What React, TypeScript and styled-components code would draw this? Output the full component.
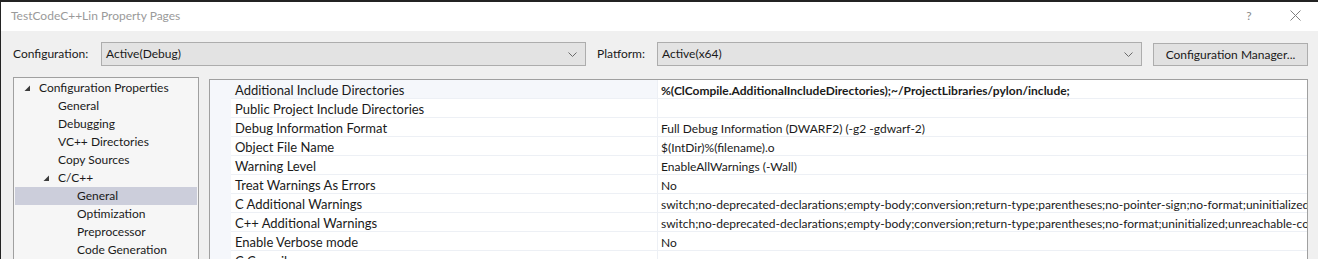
import React from "react";
import styled, { createGlobalStyle } from "styled-components";

const GlobalStyle = createGlobalStyle`
  *, *::before, *::after { box-sizing: border-box; }
  html, body { margin: 0; padding: 0; background: #232323; overflow: hidden; }
  body { font-family: Lato, "Noto Sans", sans-serif; font-size: 12px; color: #1a1a1a; }
`;

const Window = styled.div`
  margin: 2px 0 0 1px;
  height: 257px;
  background: #f0f0f0;
  display: flex;
  flex-direction: column;
  overflow: hidden;
`;

const TitleBar = styled.div`
  height: 29px;
  flex: none;
  background: #ffffff;
  display: flex;
  align-items: flex-start;
  padding-left: 10px;
`;

const Title = styled.div`
  flex: 1;
  font-size: 12px;
  line-height: 27px;
  color: #9a9a9a;
  white-space: nowrap;
`;

const CaptionButton = styled.div`
  width: 46px;
  height: 27px;
  display: flex;
  align-items: center;
  justify-content: center;
  color: #8a8a8a;
  font-size: 12px;
`;

const Body = styled.div`
  flex: 1;
  display: flex;
  flex-direction: column;
  gap: 11px;
  padding: 11px 10px 0 12px;
  min-height: 0;
`;

const ConfigRow = styled.div`
  display: flex;
  align-items: center;
  height: 24px;
  flex: none;
`;

const Label = styled.div<{ $w: number; $ml?: number }>`
  width: ${(p) => p.$w}px;
  margin-left: ${(p) => p.$ml ?? 0}px;
  line-height: 24px;
  white-space: nowrap;
`;

const Select = styled.div`
  width: 485px;
  height: 24px;
  border: 1px solid #adadad;
  background: #e3e3e3;
  display: flex;
  align-items: center;
  padding: 0 8px 0 4px;
  line-height: 22px;
`;

const SelectText = styled.span`
  flex: 1;
`;

const Button = styled.div`
  margin-left: 11px;
  width: 155px;
  height: 23px;
  border: 1px solid #adadad;
  background: #e1e1e1;
  display: flex;
  align-items: center;
  justify-content: center;
  line-height: 21px;
  white-space: nowrap;
`;

const Content = styled.div`
  flex: 1;
  display: flex;
  align-items: flex-start;
  min-height: 0;
`;

const Tree = styled.div`
  width: 186px;
  height: 200px;
  flex: none;
  border: 1px solid #a0a0a0;
  background: #f6f6f6;
  padding: 1px;
  overflow: hidden;
`;

const TreeItem = styled.div<{ $level: number; $selected?: boolean }>`
  height: 18px;
  line-height: 18px;
  display: flex;
  align-items: center;
  padding-left: ${(p) => 9 + p.$level * 19}px;
  background: ${(p) => (p.$selected ? "#cccedb" : "transparent")};
  white-space: nowrap;
`;

const Expander = styled.span`
  width: 15px;
  flex: none;
  display: flex;
  align-items: center;
`;

const TreeLabel = styled.span<{ $indent: boolean }>`
  margin-left: ${(p) => (p.$indent ? 15 : 0)}px;
`;

const Grid = styled.div`
  flex: 1;
  margin-left: 10px;
  margin-top: 2px;
  height: 200px;
  border: 1px solid #a0a0a0;
  border-bottom: none;
  background: #ffffff;
  overflow: hidden;
`;

const GridRow = styled.div`
  display: grid;
  grid-template-columns: 21px 427px 1fr;
  height: 19px;
`;

const Gutter = styled.div`
  background: #f5f7fb;
`;

const NameCell = styled.div<{ $active?: boolean }>`
  height: 19px;
  border-bottom: 1px solid #edf0f5;
  border-right: 1px solid #edf0f5;
  background: ${(p) => (p.$active ? "#f5f7fb" : "#ffffff")};
  padding: 3px 0 0 4px;
  font-size: 13px;
  line-height: 15px;
  white-space: nowrap;
  overflow: hidden;
`;

const ValueCell = styled.div<{ $bold?: boolean }>`
  height: 19px;
  border-bottom: 1px solid #edf0f5;
  padding: 3px 0 0 3px;
  font-size: 12px;
  line-height: 16px;
  font-weight: ${(p) => (p.$bold ? 700 : 400)};
  white-space: nowrap;
  overflow: hidden;
`;

const Chevron = () => (
  <svg width="9" height="5" viewBox="0 0 9 5">
    <path d="M0.5 0.5 L4.5 4.5 L8.5 0.5" fill="none" stroke="#6a6a6a" strokeWidth="1" />
  </svg>
);

const Triangle = () => (
  <svg width="7" height="7" viewBox="0 0 7 7">
    <polygon points="6,0.5 6,6 0.5,6" fill="#3c3c3c" />
  </svg>
);

const CloseIcon = () => (
  <svg width="11" height="11" viewBox="0 0 11 11">
    <path d="M0.5 0.5 L10.5 10.5 M10.5 0.5 L0.5 10.5" stroke="#808080" strokeWidth="1" fill="none" />
  </svg>
);

const tree: { label: string; level: number; expanded?: boolean; selected?: boolean }[] = [
  { label: "Configuration Properties", level: 0, expanded: true },
  { label: "General", level: 1 },
  { label: "Debugging", level: 1 },
  { label: "VC++ Directories", level: 1 },
  { label: "Copy Sources", level: 1 },
  { label: "C/C++", level: 1, expanded: true },
  { label: "General", level: 2, selected: true },
  { label: "Optimization", level: 2 },
  { label: "Preprocessor", level: 2 },
  { label: "Code Generation", level: 2 },
  { label: "Language", level: 2 },
];

const props: { name: string; value: string; bold?: boolean }[] = [
  { name: "Additional Include Directories", value: "%(ClCompile.AdditionalIncludeDirectories);~/ProjectLibraries/pylon/include;", bold: true },
  { name: "Public Project Include Directories", value: "" },
  { name: "Debug Information Format", value: "Full Debug Information (DWARF2) (-g2 -gdwarf-2)" },
  { name: "Object File Name", value: "$(IntDir)%(filename).o" },
  { name: "Warning Level", value: "EnableAllWarnings (-Wall)" },
  { name: "Treat Warnings As Errors", value: "No" },
  { name: "C Additional Warnings", value: "switch;no-deprecated-declarations;empty-body;conversion;return-type;parentheses;no-pointer-sign;no-format;uninitialized;unreachable-code" },
  { name: "C++ Additional Warnings", value: "switch;no-deprecated-declarations;empty-body;conversion;return-type;parentheses;no-format;uninitialized;unreachable-code" },
  { name: "Enable Verbose mode", value: "No" },
  { name: "C Compiler", value: "gcc" },
];

export default function App() {
  return (
    <>
      <GlobalStyle />
      <Window>
        <TitleBar>
          <Title>TestCodeC++Lin Property Pages</Title>
          <CaptionButton>?</CaptionButton>
          <CaptionButton>
            <CloseIcon />
          </CaptionButton>
        </TitleBar>
        <Body>
          <ConfigRow>
            <Label $w={88}>Configuration:</Label>
            <Select>
              <SelectText>Active(Debug)</SelectText>
              <Chevron />
            </Select>
            <Label $w={60} $ml={11}>Platform:</Label>
            <Select>
              <SelectText>Active(x64)</SelectText>
              <Chevron />
            </Select>
            <Button>Configuration Manager...</Button>
          </ConfigRow>
          <Content>
            <Tree>
              {tree.map((t, i) => (
                <TreeItem key={i} $level={t.level} $selected={t.selected}>
                  {t.expanded && (
                    <Expander>
                      <Triangle />
                    </Expander>
                  )}
                  <TreeLabel $indent={!t.expanded}>{t.label}</TreeLabel>
                </TreeItem>
              ))}
            </Tree>
            <Grid>
              {props.map((p, i) => (
                <GridRow key={i}>
                  <Gutter />
                  <NameCell $active={i === 0}>{p.name}</NameCell>
                  <ValueCell $bold={p.bold}>{p.value}</ValueCell>
                </GridRow>
              ))}
            </Grid>
          </Content>
        </Body>
      </Window>
    </>
  );
}
